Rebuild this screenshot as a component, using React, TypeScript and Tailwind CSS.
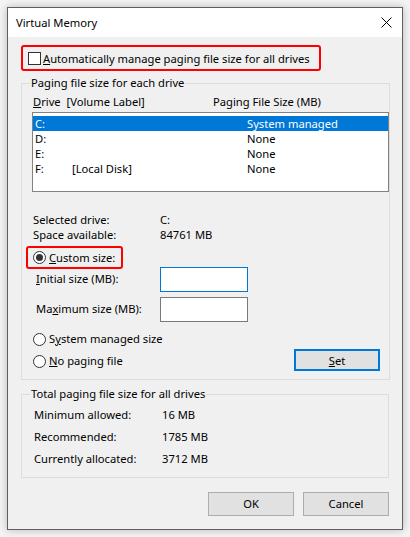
import React from 'react';

const font = { fontFamily: '"Noto Sans", "Segoe UI", Arial, sans-serif' };

function Radio({ checked }: { checked?: boolean }) {
  return (
    <span className="w-[13px] h-[13px] rounded-full border border-[#333] bg-white flex items-center justify-center shrink-0">
      {checked && <span className="w-[7px] h-[7px] rounded-full bg-[#333]" />}
    </span>
  );
}

const drives = [
  { letter: 'C:', label: '', size: 'System managed', selected: true },
  { letter: 'D:', label: '', size: 'None' },
  { letter: 'E:', label: '', size: 'None' },
  { letter: 'F:', label: '[Local Disk]', size: 'None' },
];

const totals = [
  ['Minimum allowed:', '16 MB'],
  ['Recommended:', '1785 MB'],
  ['Currently allocated:', '3712 MB'],
];

export default function App() {
  return (
    <div className="w-[410px] h-[537px] bg-[#f4f4f4] pt-[7px] pl-[7px] text-[11.2px] text-black" style={font}>
      <div className="w-[396px] h-[523px] border border-[#5f5f5f] bg-[#f0f0f0] flex flex-col shadow-[0_0_8px_rgba(0,0,0,0.25)]">
        {/* title bar */}
        <div className="h-[29px] bg-white flex items-center justify-between pl-[8px] pr-[9px]">
          <span className="leading-[15px]">Virtual Memory</span>
          <svg width="11" height="11" viewBox="0 0 11 11" className="mr-[1px]">
            <path d="M0.5 0.5 L10.5 10.5 M10.5 0.5 L0.5 10.5" stroke="#000" strokeWidth="1" />
          </svg>
        </div>

        <div className="px-[13px]">
          {/* auto manage */}
          <div className="mt-[8px] w-[300px] h-[26px] border-2 border-[#ff0000] rounded-[3px] flex items-center pl-[5px] gap-[2px]">
            <span className="w-[13px] h-[13px] border border-[#333] bg-white shrink-0" />
            <span className="leading-[15px] whitespace-nowrap">
              <u>A</u>utomatically manage paging file size for all drives
            </span>
          </div>

          {/* paging file size for each drive */}
          <fieldset className="mt-[4px] w-[368px] border border-[#dcdcdc] pl-[10px] pr-0 pb-[7px]">
            <legend className="ml-[-2px] px-[1px] leading-[16px]">Paging file size for each drive</legend>
            <div className="flex leading-[15px] mt-[3px] pl-[1px]">
              <span className="w-[180px]">
                <u>D</u>rive&nbsp; [Volume Label]
              </span>
              <span>Paging File Size (MB)</span>
            </div>
            <div className="mt-[3px] w-[357px] h-[80px] border border-[#828282] bg-white pt-[3px]">
              {drives.map((d) => (
                <div
                  key={d.letter}
                  className={`h-[15px] flex items-center pl-[2px] leading-[14px] ${d.selected ? 'bg-[#0078d7] text-white' : ''}`}
                >
                  <span className="w-[37px]">{d.letter}</span>
                  <span className="w-[175px]">{d.label}</span>
                  <span>{d.size}</span>
                </div>
              ))}
            </div>

            <div className="mt-[20px] leading-[15px] pl-[1px]">
              <div className="flex h-[15px] items-center">
                <span className="w-[127px]">Selected drive:</span>
                <span>C:</span>
              </div>
              <div className="flex h-[15px] items-center">
                <span className="w-[127px]">Space available:</span>
                <span>84761 MB</span>
              </div>
            </div>

            <div className="mt-[4px] ml-[-6px] w-[97px] h-[23px] border-2 border-[#ff0000] rounded-[3px] flex items-center pl-[5px] gap-[3px]">
              <Radio checked />
              <span className="leading-[15px]">
                <u>C</u>ustom size:
              </span>
            </div>

            <div className="mt-[-2px] flex items-center">
              <span className="w-[128px] pl-[4px]">
                <u>I</u>nitial size (MB):
              </span>
              <span className="w-[88px] h-[25px] border border-[#0078d7] bg-white" />
            </div>
            <div className="mt-[5px] flex items-center">
              <span className="w-[128px] pl-[4px]">
                Ma<u>x</u>imum size (MB):
              </span>
              <span className="w-[88px] h-[25px] border border-[#7a7a7a] bg-white" />
            </div>

            <div className="mt-[6px] flex items-end">
              <div className="w-[262px]">
                <div className="h-[22px] flex items-center gap-[3px] pl-[1px]">
                  <Radio />
                  <span>
                    S<u>y</u>stem managed size
                  </span>
                </div>
                <div className="h-[22px] flex items-center gap-[3px] pl-[1px]">
                  <Radio />
                  <span>
                    <u>N</u>o paging file
                  </span>
                </div>
              </div>
              <button className="mb-[1px] w-[86px] h-[22px] border-2 border-[#0078d7] bg-[#e1e1e1] leading-[15px]">
                <u>S</u>et
              </button>
            </div>
          </fieldset>

          {/* totals */}
          <fieldset className="mt-[6px] w-[368px] border border-[#dcdcdc] pl-[12px] pb-[7px]">
            <legend className="ml-[-4px] px-[1px] leading-[16px]">Total paging file size for all drives</legend>
            <div className="pt-[2px]">
              {totals.map(([k, v]) => (
                <div key={k} className="h-[22px] flex items-center">
                  <span className="w-[128px]">{k}</span>
                  <span>{v}</span>
                </div>
              ))}
            </div>
          </fieldset>

          {/* buttons */}
          <div className="mt-[14px] flex justify-end gap-[9px]">
            <button className="w-[86px] h-[24px] border border-[#adadad] bg-[#e1e1e1]">OK</button>
            <button className="w-[86px] h-[24px] border border-[#adadad] bg-[#e1e1e1]">Cancel</button>
          </div>
        </div>
      </div>
    </div>
  );
}
